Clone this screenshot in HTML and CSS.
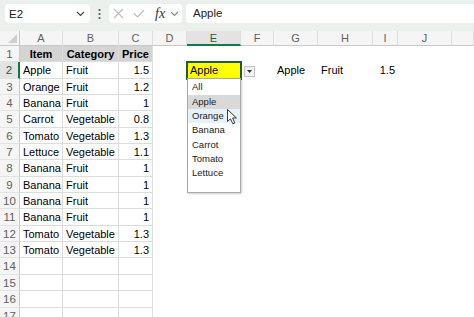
FILE: index.html
```html
<!DOCTYPE html>
<html lang="en">
<head>
    <meta charset="UTF-8">
    <meta name="viewport" content="width=device-width, initial-scale=1.0">
    <title>Filter dropdown</title>
    <link rel="stylesheet" href="styles.css">
</head>
<body>
    <div class="toolbar">
        <div class="name-box">
            <span>E2</span>
            <svg width="9" height="6" viewBox="0 0 9 6"><path d="M1 1l3.5 3.5L8 1" fill="none" stroke="#444" stroke-width="1.2"/></svg>
        </div>
        <svg class="grip" width="3" height="12" viewBox="0 0 3 12"><circle cx="1.5" cy="2" r="1.1" fill="#555"/><circle cx="1.5" cy="6" r="1.1" fill="#555"/><circle cx="1.5" cy="10" r="1.1" fill="#555"/></svg>
        <div class="fx-box">
            <svg width="11" height="11" viewBox="0 0 11 11"><path d="M1 1L10 10M10 1L1 10" fill="none" stroke="#bdbdbd" stroke-width="1.2"/></svg>
            <svg width="12" height="9" viewBox="0 0 12 9"><path d="M1 4.5L4.5 8L11 1" fill="none" stroke="#bdbdbd" stroke-width="1.2"/></svg>
            <span class="fx">fx</span>
            <svg width="9" height="6" viewBox="0 0 9 6"><path d="M1 1l3.5 3.5L8 1" fill="none" stroke="#888" stroke-width="1.1"/></svg>
        </div>
        <div class="formula">Apple</div>
    </div>

    <div class="sheet">
        <!-- column headers -->
        <div class="corner"></div>
        <div class="ch">A</div><div class="ch">B</div><div class="ch">C</div><div class="ch">D</div>
        <div class="ch sel">E</div><div class="ch">F</div><div class="ch">G</div><div class="ch">H</div>
        <div class="ch">I</div><div class="ch">J</div><div class="ch"></div>

        <div class="rh">1</div><div class="b hd">Item</div><div class="b hd">Category</div><div class="b hd">Price</div><div class="rest"></div>

        <div class="rh sel">2</div><div class="b">Apple</div><div class="b">Fruit</div><div class="b num">1.5</div>
        <div></div>
        <div class="active">Apple
            <div class="active-frame"></div>
            <div class="drop-btn"><svg width="5" height="3" viewBox="0 0 5 3"><path d="M0 0h5L2.5 3z" fill="#333"/></svg></div>
            <div class="list">
                <div class="item">All</div>
                <div class="item picked">Apple</div>
                <div class="item hover">Orange</div>
                <div class="item">Banana</div>
                <div class="item">Carrot</div>
                <div class="item">Tomato</div>
                <div class="item">Lettuce</div>
                <svg class="cursor" width="11" height="16" viewBox="0 0 11 16"><path d="M0.5 0.5V12.5L3.5 9.8L5.8 14.8L7.8 13.9L5.6 9H9.5Z" fill="#fff" stroke="#222" stroke-width="0.9" stroke-linejoin="round"/></svg>
            </div>
        </div>
        <div></div><div class="c">Apple</div><div class="c">Fruit</div><div class="c num">1.5</div><div></div><div></div>

        <div class="rh">3</div><div class="b">Orange</div><div class="b">Fruit</div><div class="b num">1.2</div><div class="rest"></div>
        <div class="rh">4</div><div class="b">Banana</div><div class="b">Fruit</div><div class="b num">1</div><div class="rest"></div>
        <div class="rh">5</div><div class="b">Carrot</div><div class="b">Vegetable</div><div class="b num">0.8</div><div class="rest"></div>
        <div class="rh">6</div><div class="b">Tomato</div><div class="b">Vegetable</div><div class="b num">1.3</div><div class="rest"></div>
        <div class="rh">7</div><div class="b">Lettuce</div><div class="b">Vegetable</div><div class="b num">1.1</div><div class="rest"></div>
        <div class="rh">8</div><div class="b">Banana</div><div class="b">Fruit</div><div class="b num">1</div><div class="rest"></div>
        <div class="rh">9</div><div class="b">Banana</div><div class="b">Fruit</div><div class="b num">1</div><div class="rest"></div>
        <div class="rh">10</div><div class="b">Banana</div><div class="b">Fruit</div><div class="b num">1</div><div class="rest"></div>
        <div class="rh">11</div><div class="b">Banana</div><div class="b">Fruit</div><div class="b num">1</div><div class="rest"></div>
        <div class="rh">12</div><div class="b">Tomato</div><div class="b">Vegetable</div><div class="b num">1.3</div><div class="rest"></div>
        <div class="rh">13</div><div class="b">Tomato</div><div class="b">Vegetable</div><div class="b num">1.3</div><div class="rest"></div>
        <div class="rh">14</div><div class="b"></div><div class="b"></div><div class="b"></div><div class="rest"></div>
        <div class="rh">15</div><div class="b"></div><div class="b"></div><div class="b"></div><div class="rest"></div>
        <div class="rh">16</div><div class="b"></div><div class="b"></div><div class="b"></div><div class="rest"></div>
        <div class="rh">17</div><div class="b"></div><div class="b"></div><div class="b"></div><div class="rest"></div>
    </div>
</body>
</html>
```

FILE: styles.css
```css
body {
    margin: 0;
    font-family: 'Liberation Sans', Arial, sans-serif;
    font-size: 11px;
    color: #000;
    background: #fff;
    overflow: hidden;
}

/* Formula bar */
.toolbar {
    display: flex;
    align-items: flex-start;
    height: 31px;
    box-sizing: border-box;
    padding-top: 4px;
    background: #ebf0ec;
}

.name-box {
    display: flex;
    align-items: center;
    justify-content: space-between;
    width: 85px;
    height: 19px;
    margin-left: 5px;
    padding: 0 5px 0 4px;
    box-sizing: border-box;
    background: #fff;
    border-radius: 4px;
    font-size: 11.5px;
    color: #222;
}

.grip {
    margin: 4px 8px 0 8px;
}

.fx-box {
    display: flex;
    align-items: center;
    width: 73px;
    height: 19px;
    padding-left: 4px;
    box-sizing: border-box;
    background: #fff;
    border-radius: 4px;
}

.fx-box svg:nth-child(2) {
    margin-left: 9px;
}

.fx {
    margin-left: 10px;
    margin-right: 5px;
    font-family: 'Liberation Serif', 'Times New Roman', serif;
    font-style: italic;
    font-size: 14px;
    color: #333;
    line-height: 19px;
}

.formula {
    flex: 1;
    height: 19px;
    margin-left: 4px;
    padding-left: 7px;
    background: #fff;
    border-radius: 4px 0 0 4px;
    line-height: 19px;
    font-size: 11.5px;
    color: #222;
}

/* Sheet grid */
.sheet {
    display: grid;
    grid-template-columns: 20px 43px 56px 34px 34px 54px 33px 44px 55px 25px 54px 1fr;
    grid-template-rows: 15px repeat(17, 16.35px);
}

.sheet > div {
    box-sizing: border-box;
    line-height: 16px;
    white-space: nowrap;
}

.corner {
    position: relative;
    background: #f5f5f5;
    border-right: 1px solid #c9c9c9;
    border-bottom: 1px solid #c9c9c9;
}

.corner::after {
    content: "";
    position: absolute;
    right: 2px;
    bottom: 2px;
    border-left: 9px solid transparent;
    border-bottom: 9px solid #cfcfcf;
}

.ch {
    background: #f5f5f5;
    border-right: 1px solid #dedede;
    border-bottom: 1px solid #c9c9c9;
    text-align: center;
    color: #616161;
    line-height: 15px !important;
}

.ch.sel {
    background: #e3e3e3;
    border-bottom: 2px solid #107c41;
    color: #1f5f38;
}

.rh {
    background: #f5f5f5;
    border-right: 1px solid #c9c9c9;
    border-bottom: 1px solid #e3e3e3;
    text-align: center;
    color: #616161;
    font-size: 11.5px;
}

.rh.sel {
    background: #e3e3e3;
    border-right: 2px solid #107c41;
    color: #1f5f38;
}

.b {
    border-right: 1px solid #dcdcdc;
    border-bottom: 1px solid #dcdcdc;
    padding: 0 2px 0 3px;
}

.hd {
    background: #d4d4d4;
    font-weight: bold;
    text-align: center;
    padding: 0;
}

.num {
    text-align: right;
    padding-right: 3px;
}

.c {
    padding: 0 3px;
}

.rest {
    grid-column: span 8;
}

/* Active cell with data validation list */
.active {
    position: relative;
    background: #ffff00;
    padding-left: 3px;
}

.active-frame {
    position: absolute;
    top: -1px;
    left: -1px;
    right: -1px;
    bottom: -1px;
    border: 2px solid #1b5e35;
}

.drop-btn {
    position: absolute;
    left: 57px;
    top: 4px;
    width: 11px;
    height: 11px;
    box-sizing: border-box;
    background: #f2f2f2;
    border: 1px solid #c3c3c3;
    display: flex;
    align-items: center;
    justify-content: center;
}

.list {
    position: absolute;
    left: 0;
    top: 16px;
    width: 54px;
    height: 115px;
    box-sizing: border-box;
    padding-top: 1px;
    background: #fff;
    border: 1px solid #a8a8a8;
    box-shadow: 1px 1px 2px rgba(0, 0, 0, 0.2);
    z-index: 5;
}

.item {
    height: 14.3px;
    line-height: 14.3px;
    padding-left: 4px;
    font-size: 9.5px;
    color: #222;
}

.item.picked {
    background: #d9d9d9;
}

.item.hover {
    background: #e5f1fb;
}

.cursor {
    position: absolute;
    left: 39px;
    top: 30px;
}
```
